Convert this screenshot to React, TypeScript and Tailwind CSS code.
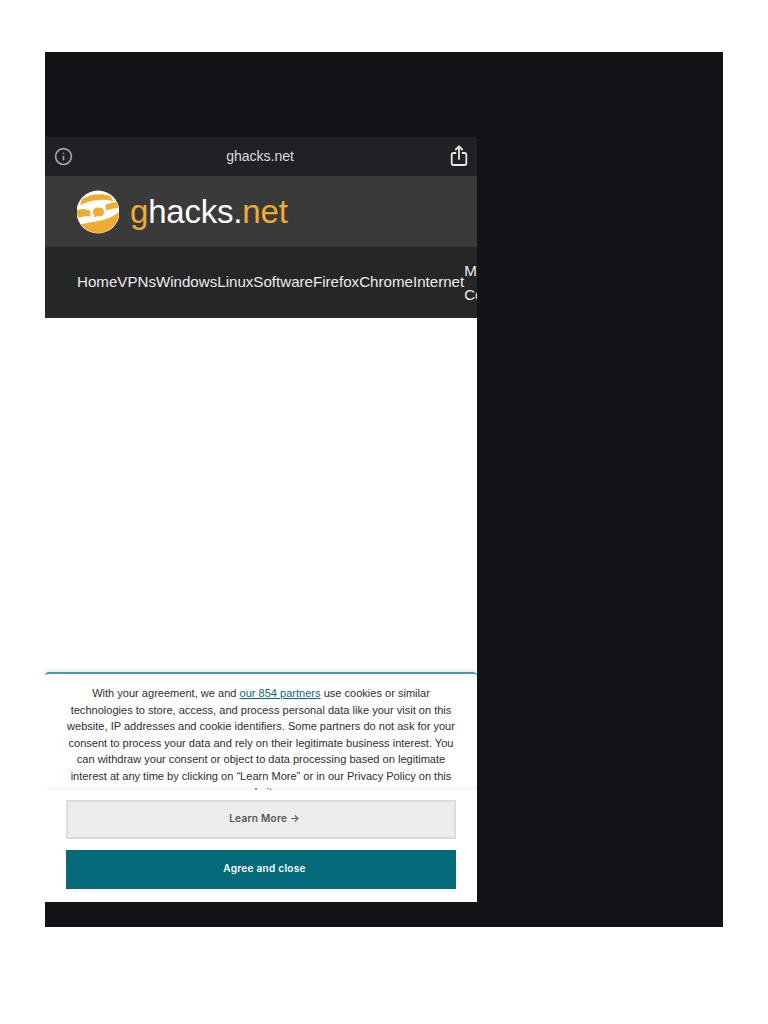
import { Info } from 'lucide-react'

function GhacksLogo() {
  return (
    <svg width="42" height="44" viewBox="0 0 42 44" className="shrink-0">
      <defs>
        <clipPath id="globe">
          <circle cx="21" cy="22" r="21" />
        </clipPath>
      </defs>
      <circle cx="21" cy="22" r="21.500" fill="#ffffff" />
      <g clipPath="url(#globe)" fill="#f0ac2e">
        <path d="M5 9C14 3.500 25 3 33 6L37 11.500C28 8.500 15 9 3 15Z" />
        <path d="M0 20C5 18.500 9 19 13 20.500L13.500 26.500C9 26 5 26.500 0 28Z" />
        <path d="M28 15C32 13 37 12 42 12V18C37 18 33 19 29.500 20.500Z" />
        <path d="M0 35C9 33 17 32 24 30.500C31 29 37 26 42 22V44H0Z" />
      </g>
      <path d="M21.500 17C25 17 27.500 19.200 27.500 22C27.500 25 25 27 21.500 27C20.800 27 20.200 26.900 19.600 26.700L16.500 28.800L17 25.300C16 24.400 15.500 23.300 15.500 22C15.500 19.200 18 17 21.500 17Z" fill="#f0ac2e" stroke="#ffffff" strokeWidth="1" />
    </svg>
  )
}

function ShareIcon() {
  return (
    <svg width="18" height="22" viewBox="0 0 18 22" fill="none" stroke="#e8e8e8" strokeWidth="1.800" strokeLinecap="round" strokeLinejoin="round">
      <path d="M5.500 8H3.500C2.400 8 1.700 8.700 1.700 9.800V18.200C1.700 19.300 2.400 20 3.500 20H14.500C15.600 20 16.300 19.300 16.300 18.200V9.800C16.300 8.700 15.600 8 14.500 8H12.500" />
      <path d="M9 14V1.500" />
      <path d="M5.800 4.500L9 1.300L12.200 4.500" />
    </svg>
  )
}

const navItems = ['Home', 'VPNs', 'Windows', 'Linux', 'Software', 'Firefox', 'Chrome', 'Internet']

export default function App() {
  return (
    <div className="min-h-[1024px] bg-white pl-[45px] pt-[52px] font-['Liberation_Sans',sans-serif]">
      <div className="flex h-[875px] w-[678px] flex-col bg-[#121317] pt-[85px]">
        <div className="flex w-[432px] flex-col overflow-hidden">
          <div className="flex h-[39px] items-center justify-between bg-[#202124] px-[9px]">
            <Info size={19} strokeWidth={2} color="#a8a8a8" />
            <span className="pr-[3px] text-[14px] text-[#dcdcdc]">ghacks.net</span>
            <span className="-mt-[2px]"><ShareIcon /></span>
          </div>

          <div className="flex h-[71px] items-center gap-[11px] bg-[#3a3a3a] pl-[32px]">
            <GhacksLogo />
            <span className="text-[33px] leading-none tracking-[-0.2px] text-white">
              <span className="text-[#f0ac2e]">g</span>hacks.<span className="text-[#f0ac2e]">net</span>
            </span>
          </div>

          <div className="flex h-[71px] items-center whitespace-nowrap bg-[#262626] pl-[32px] text-[15.120px] text-[#ececec]">
            {navItems.map((item) => (
              <span key={item}>{item}</span>
            ))}
            <span className="flex flex-col leading-[24px]">
              <span>Mobile</span>
              <span>Computing</span>
            </span>
          </div>

          <div className="flex h-[584px] flex-col justify-end bg-white">
            <div className="h-[4px] rounded-t-[6px] border-t-2 border-[#4f98a5] shadow-[0_-2px_3px_rgba(0,0,0,0.08)]" />
            <div className="flex h-[226px] flex-col bg-white">
              <div className="h-[114px] overflow-hidden px-[20px] pt-[9px] text-center text-[11.050px] leading-[16.500px] text-[#2e2e2e]">
                With your agreement, we and <span className="text-[#046a7c] underline">our 854 partners</span> use cookies or similar technologies to store, access, and process personal data like your visit on this website, IP addresses and cookie identifiers. Some partners do not ask for your consent to process your data and rely on their legitimate business interest. You can withdraw your consent or object to data processing based on legitimate interest at any time by clicking on “Learn More” or in our Privacy Policy on this website.
              </div>
              <div className="flex flex-1 flex-col gap-[11px] bg-white px-[21px] pt-[10px] font-['Inter',sans-serif] shadow-[0_-2px_3px_rgba(0,0,0,0.05)]">
                <div className="flex h-[39px] items-center justify-center border-2 border-[#dcdcdc] bg-[#ececec] pb-[2px] pl-[7px] text-[10px] font-semibold tracking-[0.3px] text-[#555555]">
                  Learn More →
                </div>
                <div className="flex h-[39px] items-center justify-center bg-[#046a7c] pb-[2px] pl-[7px] text-[10px] font-semibold tracking-[0.3px] text-white">
                  Agree and close
                </div>
              </div>
            </div>
          </div>
        </div>
      </div>
    </div>
  )
}
